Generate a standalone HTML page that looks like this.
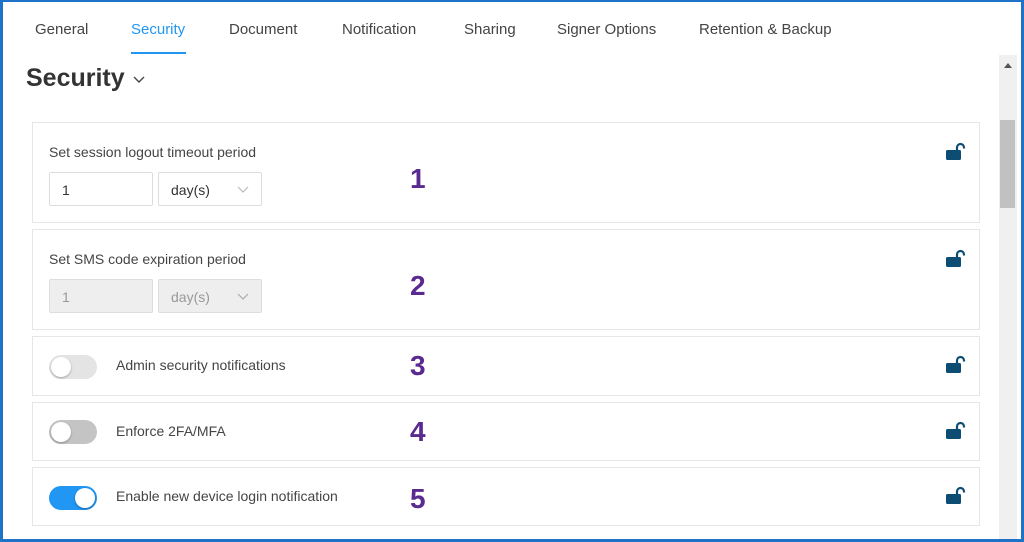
<!DOCTYPE html>
<html><head><style>
*{box-sizing:border-box;margin:0;padding:0}
body{width:1024px;height:542px;overflow:hidden;background:#fff;font-family:"Liberation Sans",sans-serif;color:#3a3a3a;position:relative}
.frame{position:absolute;left:0;top:0;width:1024px;height:542px;border:3px solid #1e73c8;border-top-width:2px;pointer-events:none;z-index:5}
.tab{position:absolute;top:21px;font-size:15px;color:#444}
.tab.act{color:#2196f3}
.uline{position:absolute;left:131px;top:52px;width:55px;height:2px;background:#2196f3}
h1{position:absolute;left:26px;top:64px;font-size:25px;font-weight:bold;color:#333}
.chev{position:absolute;left:133px;top:76px}
.card{position:absolute;left:32px;width:948px;border:1px solid #e6e6e6;background:#fff}
.lbl{position:absolute;left:16px;font-size:14px;color:#444}
.inp{position:absolute;height:34px;border:1px solid #ddd;border-radius:2px;font-size:14px;padding:9px 12px;color:#333}
.num{position:absolute;left:377px;font-size:28px;font-weight:bold;color:#5a2a90}
.lock{position:absolute;left:912px}
.tog{position:absolute;left:16px;width:48px;height:24px;border-radius:12px}
.tog i{position:absolute;top:2px;width:20px;height:20px;border-radius:50%;background:#fff;box-shadow:0 1px 2px rgba(0,0,0,.3)}
.sb{position:absolute;left:999px;top:55px;width:18px;height:487px;background:#f0f0f0}
.thumb{position:absolute;left:1000px;top:120px;width:15px;height:88px;background:#c1c1c1}
</style></head><body>
<div class="frame"></div>
<span class="tab" style="left:35px">General</span>
<span class="tab act" style="left:131px">Security</span>
<span class="tab" style="left:229px">Document</span>
<span class="tab" style="left:342px">Notification</span>
<span class="tab" style="left:464px">Sharing</span>
<span class="tab" style="left:557px">Signer Options</span>
<span class="tab" style="left:699px">Retention &amp; Backup</span>
<div class="uline"></div>
<h1>Security</h1>
<svg class="chev" width="12" height="8" viewBox="0 0 12 8"><path d="M1 1l5 5 5-5" fill="none" stroke="#444" stroke-width="1.4"/></svg>
<div class="sb"><svg width="18" height="14" style="position:absolute;top:4px"><path d="M5 9h8l-4-5z" fill="#555"/></svg></div>
<div class="thumb"></div>

<div class="card" style="top:122px;height:101px">
 <span class="lbl" style="top:21px">Set session logout timeout period</span>
 <div class="inp" style="left:16px;top:49px;width:104px">1</div>
 <div class="inp" style="left:125px;top:49px;width:104px">day(s)<svg style="position:absolute;right:12px;top:13px" width="12" height="8"><path d="M1 1l5 5 5-5" fill="none" stroke="#bbb" stroke-width="1.2"/></svg></div>
 <span class="num" style="top:40px">1</span>
 <svg class="lock" style="top:19px" width="22" height="19" viewBox="0 0 22 19"><path d="M12 8V5.5a3.5 3.5 0 0 1 7 0v1" fill="none" stroke="#0e4d73" stroke-width="2.2"/><rect x="1" y="8" width="15" height="10" rx="1.5" fill="#0e4d73"/></svg>
</div>
<div class="card" style="top:229px;height:101px">
 <span class="lbl" style="top:21px">Set SMS code expiration period</span>
 <div class="inp" style="left:16px;top:49px;width:104px;background:#eee;color:#999">1</div>
 <div class="inp" style="left:125px;top:49px;width:104px;background:#eee;color:#999">day(s)<svg style="position:absolute;right:12px;top:13px" width="12" height="8"><path d="M1 1l5 5 5-5" fill="none" stroke="#aaa" stroke-width="1.2"/></svg></div>
 <span class="num" style="top:40px">2</span>
 <svg class="lock" style="top:19px" width="22" height="19" viewBox="0 0 22 19"><path d="M12 8V5.5a3.5 3.5 0 0 1 7 0v1" fill="none" stroke="#0e4d73" stroke-width="2.2"/><rect x="1" y="8" width="15" height="10" rx="1.5" fill="#0e4d73"/></svg>
</div>
<div class="card" style="top:336px;height:60px">
 <div class="tog" style="top:18px;background:#e4e4e4"><i style="left:2px"></i></div>
 <span class="lbl" style="left:83px;top:20px">Admin security notifications</span>
 <span class="num" style="top:13px">3</span>
 <svg class="lock" style="top:18px" width="22" height="19" viewBox="0 0 22 19"><path d="M12 8V5.5a3.5 3.5 0 0 1 7 0v1" fill="none" stroke="#0e4d73" stroke-width="2.2"/><rect x="1" y="8" width="15" height="10" rx="1.5" fill="#0e4d73"/></svg>
</div>
<div class="card" style="top:402px;height:59px">
 <div class="tog" style="top:17px;background:#c4c4c4"><i style="left:2px"></i></div>
 <span class="lbl" style="left:83px;top:20px">Enforce 2FA/MFA</span>
 <span class="num" style="top:13px">4</span>
 <svg class="lock" style="top:18px" width="22" height="19" viewBox="0 0 22 19"><path d="M12 8V5.5a3.5 3.5 0 0 1 7 0v1" fill="none" stroke="#0e4d73" stroke-width="2.2"/><rect x="1" y="8" width="15" height="10" rx="1.5" fill="#0e4d73"/></svg>
</div>
<div class="card" style="top:467px;height:59px">
 <div class="tog" style="top:18px;background:#2196f3"><i style="left:26px"></i></div>
 <span class="lbl" style="left:83px;top:20px">Enable new device login notification</span>
 <span class="num" style="top:15px">5</span>
 <svg class="lock" style="top:18px" width="22" height="19" viewBox="0 0 22 19"><path d="M12 8V5.5a3.5 3.5 0 0 1 7 0v1" fill="none" stroke="#0e4d73" stroke-width="2.2"/><rect x="1" y="8" width="15" height="10" rx="1.5" fill="#0e4d73"/></svg>
</div>
</body></html>
